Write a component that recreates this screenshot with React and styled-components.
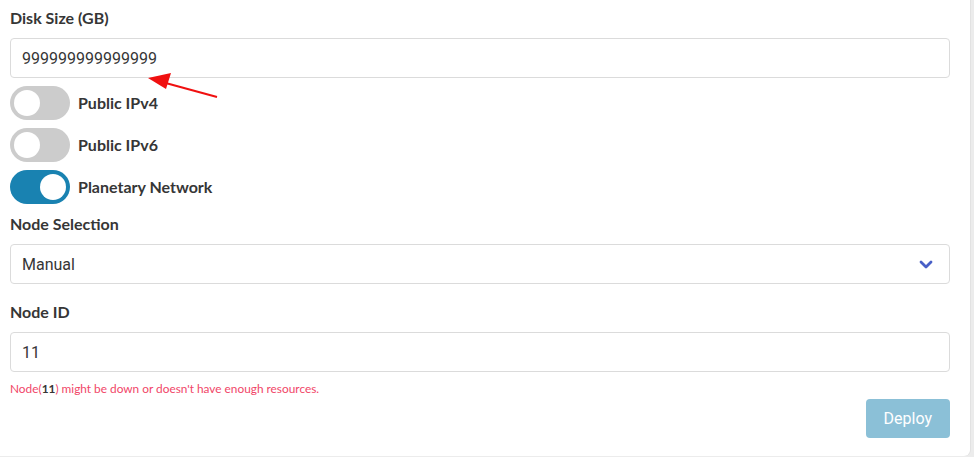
import React from "react";
import styled, { createGlobalStyle } from "styled-components";

const GlobalStyle = createGlobalStyle`
  html, body {
    margin: 0;
    padding: 0;
    background: #ececec;
  }
  * {
    box-sizing: border-box;
  }
`;

const Card = styled.div`
  position: relative;
  width: 970px;
  height: 456px;
  padding: 6px 20px 0 10px;
  background: #fff;
  border-bottom-right-radius: 6px;
  box-shadow: 1px 0 0 #e2e2e2;
  display: flex;
  flex-direction: column;
`;

const Label = styled.label`
  display: block;
  font-family: Lato, "Liberation Sans", sans-serif;
  font-size: 16px;
  font-weight: 700;
  line-height: 24px;
  color: #363636;
  margin-top: ${(p) => p.$top || 0}px;
  margin-bottom: 8px;
`;

const Input = styled.div`
  height: 40px;
  width: 940px;
  padding: 0 11px;
  display: flex;
  align-items: center;
  justify-content: space-between;
  border: 1px solid #dbdbdb;
  border-radius: 4px;
  background: #fff;
  font-family: Roboto, "Liberation Sans", sans-serif;
  font-size: 16px;
  color: #363636;
`;

const Chevron = styled.svg`
  margin-right: 5px;
`;

const ToggleList = styled.div`
  display: flex;
  flex-direction: column;
  gap: 8px;
  margin-top: 8px;
`;

const ToggleRow = styled.div`
  display: flex;
  align-items: center;
  gap: 8px;
`;

const Switch = styled.span`
  position: relative;
  width: 60px;
  height: 34px;
  border-radius: 34px;
  background: ${(p) => (p.$on ? "#1982b1" : "#cccccc")};

  &::before {
    content: "";
    position: absolute;
    left: 4px;
    top: 4px;
    width: 26px;
    height: 26px;
    border-radius: 50%;
    background: #fff;
    transform: translateX(${(p) => (p.$on ? 26 : 0)}px);
  }
`;

const ToggleText = styled.span`
  font-family: Lato, "Liberation Sans", sans-serif;
  font-size: 16px;
  font-weight: 700;
  color: #363636;
  margin-top: -1px;
`;

const Help = styled.p`
  margin: 8px 0 0;
  font-family: Lato, "Liberation Sans", sans-serif;
  font-size: 11.85px;
  line-height: 18px;
  color: #f14668;

  b {
    color: #363636;
  }
`;

const Actions = styled.div`
  display: flex;
  justify-content: flex-end;
  width: 940px;
  margin-top: 1px;
`;

const Button = styled.button`
  height: 39px;
  padding: 0 17px;
  border: 1px solid transparent;
  border-radius: 4px;
  background: #1982b1;
  opacity: 0.5;
  color: #fff;
  font-family: Roboto, "Liberation Sans", sans-serif;
  font-size: 16px;
  cursor: not-allowed;
`;

const Annotation = styled.svg`
  position: absolute;
  left: 0;
  top: 0;
  pointer-events: none;
`;

const toggles = [
  { label: "Public IPv4", on: false },
  { label: "Public IPv6", on: false },
  { label: "Planetary Network", on: true },
];

export default function App() {
  return (
    <>
      <GlobalStyle />
      <Card>
        <Label>Disk Size (GB)</Label>
        <Input>999999999999999</Input>

        <ToggleList>
          {toggles.map((t) => (
            <ToggleRow key={t.label}>
              <Switch $on={t.on} />
              <ToggleText>{t.label}</ToggleText>
            </ToggleRow>
          ))}
        </ToggleList>

        <Label $top={8}>Node Selection</Label>
        <Input>
          Manual
          <Chevron width="14" height="10" viewBox="0 0 14 10">
            <polyline
              points="2,3 7,8 12,3"
              fill="none"
              stroke="#485fc7"
              strokeWidth="2.8"
              strokeLinecap="round"
              strokeLinejoin="round"
            />
          </Chevron>
        </Input>

        <Label $top={16}>Node ID</Label>
        <Input>11</Input>
        <Help>
          Node(<b>11</b>) might be down or doesn't have enough resources.
        </Help>

        <Actions>
          <Button disabled>Deploy</Button>
        </Actions>

        <Annotation width="970" height="456">
          <line x1="217" y1="97" x2="162" y2="82" stroke="#f01010" strokeWidth="2" />
          <polygon points="148,78 171,73 166,89" fill="#f01010" />
        </Annotation>
      </Card>
    </>
  );
}
